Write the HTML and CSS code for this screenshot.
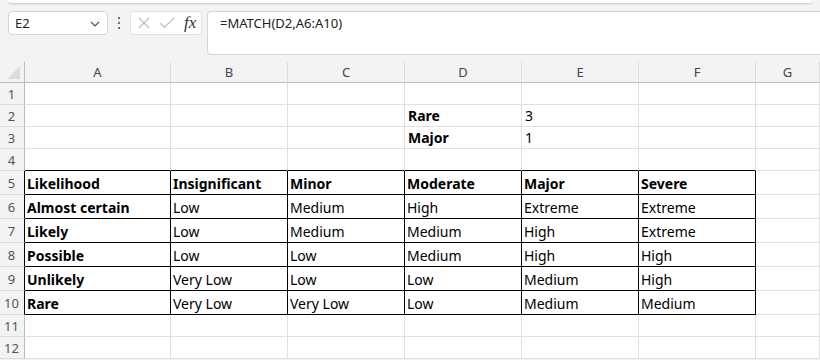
FILE: index.html
```html
<!DOCTYPE html>
<html>
<head>
<meta charset="utf-8">
<link rel="stylesheet" href="styles.css">
</head>
<body>
<div class="ribbon-edge"></div>
<div class="formula-bar">
  <div class="name-box">
    <span class="name-text">E2</span>
    <svg class="chev" width="10" height="6" viewBox="0 0 10 6"><path d="M1 1 L5 5 L9 1" fill="none" stroke="#555" stroke-width="1.2"/></svg>
  </div>
  <div class="dots"><span></span><span></span><span></span></div>
  <div class="fx-box">
    <svg class="ico" width="12" height="12" viewBox="0 0 12 12"><path d="M1 1 L11 11 M11 1 L1 11" stroke="#bdbdbd" stroke-width="1.2" fill="none"/></svg>
    <svg class="ico" width="16" height="12" viewBox="0 0 16 12"><path d="M1 6 L5.5 10.5 L15 1" stroke="#bdbdbd" stroke-width="1.2" fill="none"/></svg>
    <span class="fx">fx</span>
  </div>
  <div class="formula-box">=MATCH(D2,A6:A10)</div>
</div>

<div class="sheet">
  <div class="corner"><span class="tri"></span></div>
  <div class="ch">A</div><div class="ch">B</div><div class="ch">C</div><div class="ch">D</div><div class="ch">E</div><div class="ch">F</div><div class="ch">G</div>

  <div class="rh">1</div><div class="c"></div><div class="c"></div><div class="c"></div><div class="c"></div><div class="c"></div><div class="c"></div><div class="c"></div>
  <div class="rh">2</div><div class="c"></div><div class="c"></div><div class="c"></div><div class="c b">Rare</div><div class="c">3</div><div class="c"></div><div class="c"></div>
  <div class="rh">3</div><div class="c"></div><div class="c"></div><div class="c"></div><div class="c b">Major</div><div class="c">1</div><div class="c"></div><div class="c"></div>
  <div class="rh">4</div><div class="c top"></div><div class="c top"></div><div class="c top"></div><div class="c top"></div><div class="c top"></div><div class="c top"></div><div class="c"></div>

  <div class="rh tr">5</div><div class="c t b">Likelihood</div><div class="c t b">Insignificant</div><div class="c t b">Minor</div><div class="c t b">Moderate</div><div class="c t b">Major</div><div class="c t b">Severe</div><div class="c tall"></div>
  <div class="rh tr">6</div><div class="c t b">Almost certain</div><div class="c t">Low</div><div class="c t">Medium</div><div class="c t">High</div><div class="c t">Extreme</div><div class="c t">Extreme</div><div class="c tall"></div>
  <div class="rh tr">7</div><div class="c t b">Likely</div><div class="c t">Low</div><div class="c t">Medium</div><div class="c t">Medium</div><div class="c t">High</div><div class="c t">Extreme</div><div class="c tall"></div>
  <div class="rh tr">8</div><div class="c t b">Possible</div><div class="c t">Low</div><div class="c t">Low</div><div class="c t">Medium</div><div class="c t">High</div><div class="c t">High</div><div class="c tall"></div>
  <div class="rh tr">9</div><div class="c t b">Unlikely</div><div class="c t">Very Low</div><div class="c t">Low</div><div class="c t">Low</div><div class="c t">Medium</div><div class="c t">High</div><div class="c tall"></div>
  <div class="rh tr">10</div><div class="c t b">Rare</div><div class="c t">Very Low</div><div class="c t">Very Low</div><div class="c t">Low</div><div class="c t">Medium</div><div class="c t">Medium</div><div class="c tall"></div>

  <div class="rh">11</div><div class="c"></div><div class="c"></div><div class="c"></div><div class="c"></div><div class="c"></div><div class="c"></div><div class="c"></div>
  <div class="rh">12</div><div class="c"></div><div class="c"></div><div class="c"></div><div class="c"></div><div class="c"></div><div class="c"></div><div class="c"></div>
</div>
</body>
</html>
```

FILE: styles.css
```css
* { box-sizing: border-box; }
html, body { margin: 0; padding: 0; }
body {
  background: #f3f3f3;
  font-family: "Noto Sans", "Open Sans", sans-serif;
  width: 820px;
  height: 360px;
  overflow: hidden;
}
.ribbon-edge {
  height: 3px;
  margin: 0 8px;
  background: #fff;
  border-radius: 0 0 6px 6px;
  box-shadow: 0 1px 2px rgba(0,0,0,0.18);
}
.formula-bar {
  display: flex;
  align-items: flex-start;
  padding: 8px 0 0 8px;
  height: 59px;
}
.name-box {
  width: 100px;
  height: 24px;
  background: #fff;
  border: 1px solid #d6d6d6;
  border-radius: 4px;
  display: flex;
  align-items: center;
  justify-content: space-between;
  padding: 0 7px 0 6px;
  font-size: 13px;
  color: #222;
}
.chev { margin-top: 1px; }
.dots {
  width: 22px;
  height: 24px;
  display: flex;
  flex-direction: column;
  align-items: center;
  justify-content: center;
  gap: 3px;
}
.dots span {
  width: 2px;
  height: 2px;
  background: #444;
  border-radius: 1px;
}
.fx-box {
  width: 72px;
  height: 24px;
  background: #fff;
  border: 1px solid #e0e0e0;
  border-radius: 4px;
  display: flex;
  align-items: center;
  gap: 9px;
  padding: 0 0 0 7px;
}
.fx {
  font-family: "Liberation Serif", "DejaVu Serif", serif;
  font-style: italic;
  font-size: 17px;
  color: #333;
  margin-left: 0;
}
.formula-box {
  margin-left: 5px;
  flex: 1;
  height: 44px;
  background: #fff;
  border: 1px solid #d6d6d6;
  border-right: none;
  border-radius: 4px 0 0 4px;
  padding: 2px 0 0 12px;
  font-size: 13px;
  color: #222;
}

.sheet {
  display: grid;
  grid-template-columns: 25px 146px 117px 117px 117px 117px 117px 64px;
  grid-template-rows: 21px repeat(4, 22px) repeat(6, 24px) repeat(2, 22px);
  background: #fff;
}
.corner {
  background: #f3f3f3;
  border-right: 1px solid #bdbdbd;
  border-bottom: 1px solid #bdbdbd;
  position: relative;
}
.tri {
  position: absolute;
  right: 4px;
  bottom: 3px;
  width: 13px;
  height: 13px;
  background: #dcdcdc;
  clip-path: polygon(100% 0, 100% 100%, 0 100%);
}
.ch {
  background: #f3f3f3;
  border-right: 1px solid #dcdcdc;
  border-bottom: 1px solid #bdbdbd;
  font-size: 13px;
  color: #444;
  display: flex;
  align-items: center;
  justify-content: center;
}
.rh {
  background: #f3f3f3;
  border-right: 1px solid #bdbdbd;
  border-bottom: 1px solid #dcdcdc;
  font-size: 13px;
  color: #555;
  display: flex;
  align-items: center;
  justify-content: center;
  padding-right: 1px;
}
.rh.tr { border-right-color: #000; }
.c {
  border-right: 1px solid #e0e0e0;
  border-bottom: 1px solid #e0e0e0;
  font-size: 14px;
  color: #000;
  display: flex;
  align-items: flex-end;
  padding: 0 0 1px 3px;
  white-space: nowrap;
  overflow: hidden;
  line-height: 19px;
}
.c.top { border-bottom-color: #000; }
.c.t { border-right-color: #000; border-bottom-color: #000; padding-left: 2px; }
.b { font-weight: bold; }
```
